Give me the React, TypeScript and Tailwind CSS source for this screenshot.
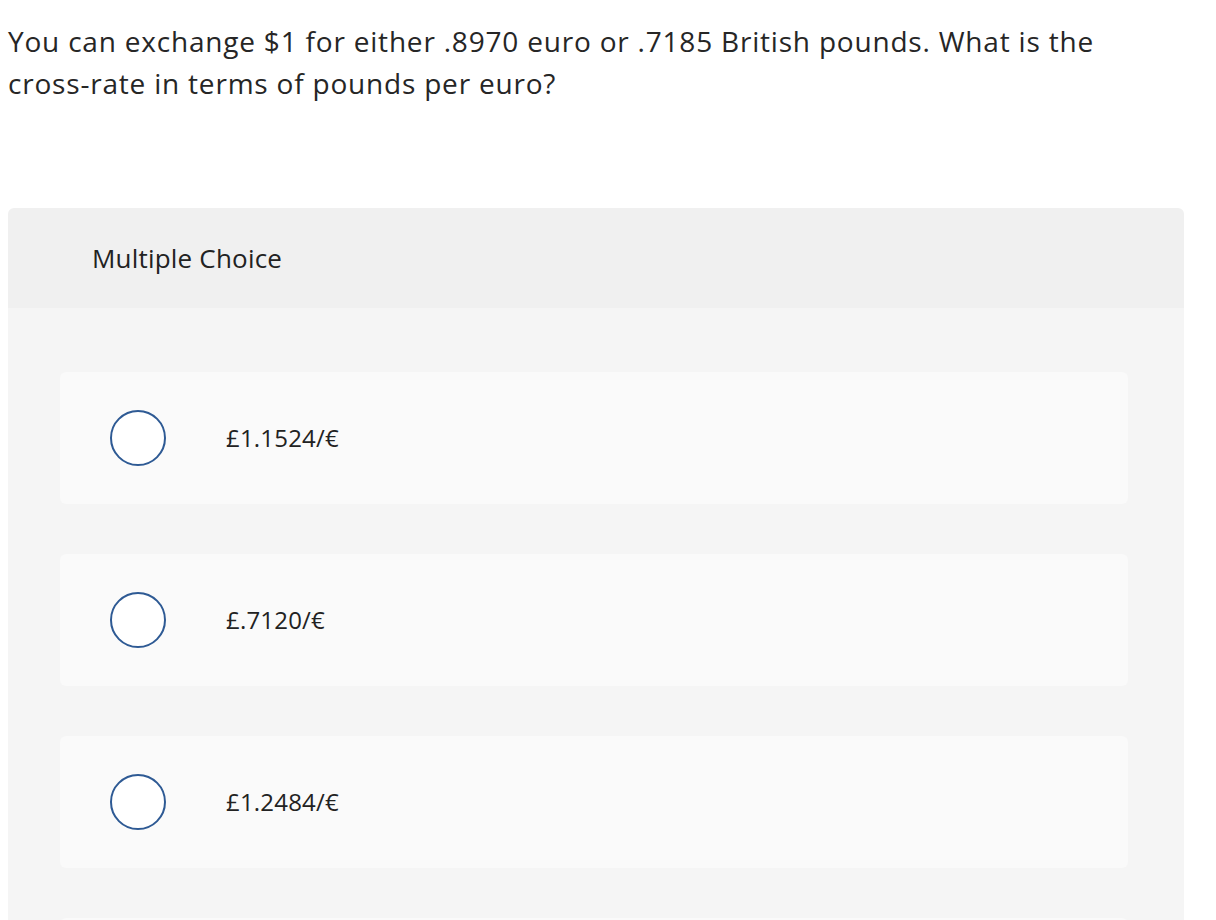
import React from 'react';

const options = ['£1.1524/€', '£.7120/€', '£1.2484/€'];

const App = () => {
    return (
        <div className="h-[920px] overflow-hidden bg-white px-2" style={{ fontFamily: '"Open Sans", Lato, sans-serif' }}>
            <p className="w-[1176px] pt-[20px] text-[28px] tracking-[0.8px] leading-[42px] text-[#262626]">
                You can exchange $1 for either .8970 euro or .7185 British pounds. What is the cross-rate in terms of pounds per euro?
            </p>

            <div className="mt-[104px] w-[1176px] rounded-t-md overflow-hidden">
                <div className="h-[100px] bg-[#f0f0f0] flex items-center pl-[84px]">
                    <h2 className="text-[26px] tracking-[0.2px] text-[#222]">Multiple Choice</h2>
                </div>
                <div className="bg-[#f5f5f5] pl-[52px] pr-[56px] pt-[64px] pb-[50px] flex flex-col gap-[50px]">
                    {options.map((opt) => (
                        <div key={opt} className="h-[132px] rounded-md bg-[#fafafa] flex items-center pl-[50px]">
                            <span className="w-[56px] h-[56px] rounded-full border-2 border-[#2e5a94] bg-white shrink-0" />
                            <span className="ml-[60px] text-[24px] tracking-[0.2px] text-[#222]">{opt}</span>
                        </div>
                    ))}
                    {/* next option starts just below the fold */}
                    <div className="h-[132px] rounded-md bg-[#fafafa]" />
                </div>
            </div>
        </div>
    );
};

export default App;
